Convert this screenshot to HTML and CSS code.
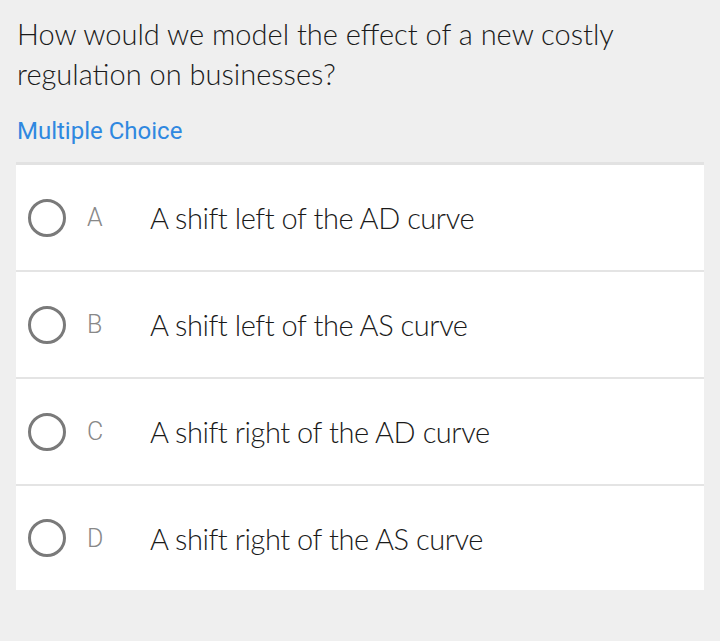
FILE: index.html
```html
<!DOCTYPE html>
<html>
<head>
<meta charset="utf-8">
<link rel="stylesheet" href="styles.css">
</head>
<body>
<div class="page">
  <h1 class="question">How would we model the effect of a new costly regulation on businesses?</h1>
  <div class="type">Multiple Choice</div>
  <ul class="options">
    <li class="option"><span class="radio"></span><span class="letter">A</span><span class="text">A shift left of the AD curve</span></li>
    <li class="option"><span class="radio"></span><span class="letter">B</span><span class="text">A shift left of the AS curve</span></li>
    <li class="option"><span class="radio"></span><span class="letter">C</span><span class="text">A shift right of the AD curve</span></li>
    <li class="option"><span class="radio"></span><span class="letter">D</span><span class="text">A shift right of the AS curve</span></li>
  </ul>
</div>
</body>
</html>
```
FILE: styles.css
```css
html, body {
  margin: 0;
  padding: 0;
  background: #efefef;
}
.page {
  padding: 14px 16px 0 16px;
}
.question {
  margin: 0;
  padding-left: 1px;
  font-family: "Lato", "Open Sans", sans-serif;
  font-weight: 300;
  font-size: 29px;
  line-height: 40px;
  color: #1a1a1a;
  width: 640px;
}
.type {
  margin-top: 23px;
  padding-left: 1px;
  font-family: "Roboto", sans-serif;
  font-size: 24px;
  line-height: 28px;
  color: #2f88e0;
}
.options {
  list-style: none;
  margin: 17px 0 0 0;
  padding: 0;
  background: #fff;
  border-top: 3px solid #e2e2e2;
}
.option {
  display: flex;
  align-items: center;
  height: 105px;
  border-bottom: 2px solid #e4e4e4;
}
.option:last-child {
  border-bottom: none;
  height: 104px;
}
.radio {
  width: 32px;
  height: 32px;
  border: 3.5px solid #7a7a7a;
  border-radius: 50%;
  margin-left: 12px;
  flex: none;
}
.letter {
  font-family: "Roboto", sans-serif;
  font-weight: 300;
  font-size: 25px;
  color: #888;
  margin-left: 21px;
  width: 63px;
}
.text {
  font-family: "Lato", sans-serif;
  font-weight: 300;
  font-size: 29px;
  color: #1a1a1a;
  letter-spacing: -0.45px;
}
```
